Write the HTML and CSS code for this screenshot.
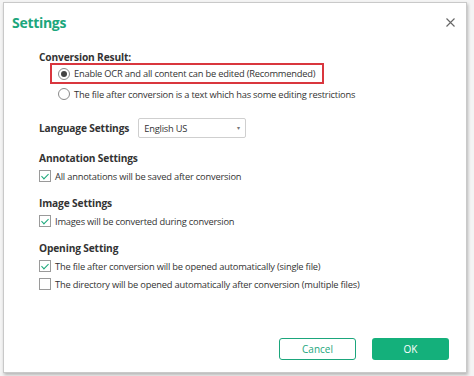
FILE: index.html
```html
<!DOCTYPE html>
<html lang="en">
<head>
    <meta charset="UTF-8">
    <title>Settings</title>
    <link rel="stylesheet" href="styles.css">
</head>
<body>
    <!-- Settings dialog -->
    <div class="dialog">
        <div class="dialog-header">
            <h1>Settings</h1>
            <svg class="close" width="9" height="9" viewBox="0 0 9 9">
                <path d="M0.5 0.5 L8.5 8.5 M8.5 0.5 L0.5 8.5" stroke="#666" stroke-width="1.1"/>
            </svg>
        </div>

        <div class="dialog-body">
            <!-- Conversion result -->
            <div class="section">
                <p class="label">Conversion Result:</p>
                <div class="radio-group">
                    <div class="radio-row highlighted">
                        <span class="radio checked"></span>
                        <span>Enable OCR and all content can be edited (Recommended)</span>
                    </div>
                    <div class="radio-row">
                        <span class="radio"></span>
                        <span>The file after conversion is a text which has some editing restrictions</span>
                    </div>
                </div>
            </div>

            <!-- Language -->
            <div class="language-row">
                <span class="label">Language Settings</span>
                <div class="select">
                    <span>English US</span>
                    <span class="caret">&#9662;</span>
                </div>
            </div>

            <!-- Annotation -->
            <div class="section">
                <p class="label">Annotation Settings</p>
                <div class="check-row"><span class="checkbox checked"></span>All annotations will be saved after conversion</div>
            </div>

            <!-- Image -->
            <div class="section">
                <p class="label">Image Settings</p>
                <div class="check-row"><span class="checkbox checked"></span>Images will be converted during conversion</div>
            </div>

            <!-- Opening -->
            <div class="section">
                <p class="label">Opening Setting</p>
                <div class="check-row"><span class="checkbox checked"></span>The file after conversion will be opened automatically (single file)</div>
                <div class="check-row"><span class="checkbox"></span>The directory will be opened automatically after conversion (multiple files)</div>
            </div>
        </div>

        <div class="dialog-footer">
            <button class="btn btn-cancel">Cancel</button>
            <button class="btn btn-ok">OK</button>
        </div>
    </div>
</body>
</html>
```

FILE: styles.css
```css
* {
    margin: 0;
    padding: 0;
    box-sizing: border-box;
}

body {
    font-family: "Open Sans", "Noto Sans", sans-serif;
    background-color: #f4f4f4;
    padding: 2px 0 0 3px;
    width: 474px;
    height: 376px;
    overflow: hidden;
}

/* Dialog */
.dialog {
    width: 464px;
    height: 371px;
    background-color: #fff;
    border: 1px solid #c9c9c9;
    box-shadow: 1px 2px 3px rgba(0, 0, 0, 0.25);
    display: flex;
    flex-direction: column;
}

.dialog-header {
    display: flex;
    justify-content: space-between;
    align-items: center;
    padding: 4px 11px 0 8px;
    height: 34px;
}

.dialog-header h1 {
    font-size: 14px;
    font-weight: bold;
    color: #1ba67c;
    letter-spacing: -0.3px;
}

.dialog-body {
    padding: 13px 0 0 35px;
    font-size: 9.3px;
    letter-spacing: -0.2px;
    color: #333;
    flex: 1;
}

.label {
    font-size: 10.2px;
    line-height: 14px;
    font-weight: bold;
    color: #333;
    letter-spacing: -0.15px;
}

.section {
    margin-bottom: 11px;
}

/* Radios */
.radio-group {
    padding-left: 11px;
    margin-top: -1px;
}

.radio-row {
    display: flex;
    align-items: center;
    gap: 4px;
    height: 20px;
    padding-left: 8px;
    width: 274px;
    white-space: nowrap;
}

.radio-row.highlighted {
    height: 21px;
    border: 2px solid #d9363e;
    padding-left: 6px;
}

.radio {
    width: 12px;
    height: 12px;
    border: 1px solid #8a8a8a;
    border-radius: 50%;
    flex-shrink: 0;
    display: flex;
    justify-content: center;
    align-items: center;
}

.radio.checked::after {
    content: "";
    width: 6px;
    height: 6px;
    border-radius: 50%;
    background-color: #444;
}

/* Language select */
.language-row {
    display: flex;
    align-items: center;
    gap: 9px;
    margin: 14px 0 13px;
}

.select {
    width: 108px;
    height: 20px;
    border: 1px solid #cfcfcf;
    border-radius: 2px;
    display: flex;
    justify-content: space-between;
    align-items: center;
    padding: 0 5px;
    color: #333;
}

.caret {
    font-size: 6px;
    color: #777;
}

/* Checkboxes */
.check-row {
    display: flex;
    align-items: center;
    gap: 4px;
    height: 18px;
    white-space: nowrap;
}

.label + .check-row {
    margin-top: 2px;
}

.checkbox {
    width: 12px;
    height: 12px;
    border: 1px solid #9a9a9a;
    flex-shrink: 0;
    position: relative;
}

.checkbox.checked::after {
    content: "";
    position: absolute;
    left: 3px;
    top: 1px;
    width: 3px;
    height: 6px;
    border: solid #19a87a;
    border-width: 0 1.5px 1.5px 0;
    transform: rotate(45deg);
}

/* Footer buttons */
.dialog-footer {
    display: flex;
    justify-content: flex-end;
    gap: 16px;
    padding: 0 17px 12px 0;
}

.btn {
    width: 77px;
    height: 22px;
    border-radius: 3px;
    font-family: "Open Sans", sans-serif;
    font-size: 10px;
    cursor: pointer;
}

.btn-cancel {
    background-color: #fff;
    color: #1ba67c;
    border: 1px solid #1ba67c;
}

.btn-ok {
    background-color: #14b07b;
    color: #fff;
    border: none;
}
```
